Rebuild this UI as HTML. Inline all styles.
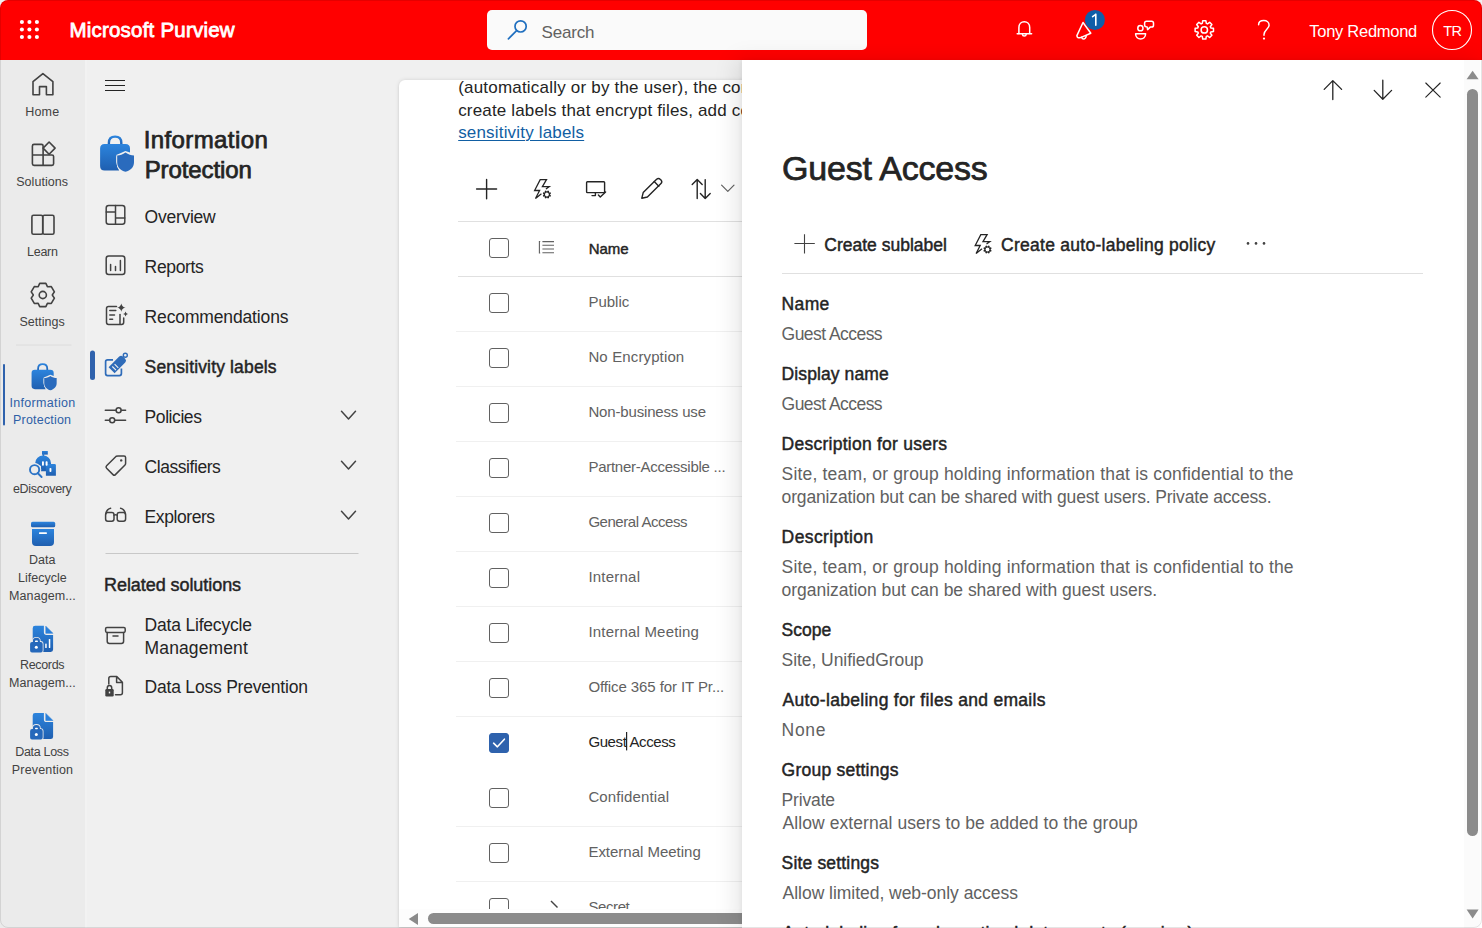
<!DOCTYPE html><html><head><meta charset="utf-8"><title>Microsoft Purview</title><style>
html,body{margin:0;padding:0;width:1482px;height:928px;overflow:hidden;background:#f0f0f0;font-family:'Liberation Sans',sans-serif}
.t{position:absolute;line-height:1;white-space:nowrap}
.a{position:absolute}
svg.a{overflow:visible}
.cb{position:absolute;width:20px;height:20px;box-sizing:border-box;border:1px solid #616161;border-radius:3px;background:#fff}
.sep{position:absolute;height:1px}
</style></head><body>
<div class="a" style="left:0;top:60px;width:85px;height:868px;background:#ebebeb"></div><div class="a" style="left:85px;top:60px;width:2px;height:868px;background:#f2f2f2"></div>
<div class="a" style="left:87px;top:60px;width:700px;height:868px;background:#f0f0f0"></div>
<div class="a" style="left:399px;top:80px;width:420px;height:847px;background:#fff;border-radius:6px 6px 0 0;box-shadow:0 0 4px rgba(0,0,0,0.12),0 1px 2px rgba(0,0,0,0.08)"></div>
<div class="a" style="left:399px;top:80px;width:420px;height:828.7px;overflow:hidden">
<div style="position:absolute;left:-399px;top:-80px;width:1482px;height:928px">
<div class="sep" style="left:458px;top:221px;width:300px;background:#e0e0e0"></div>
<div class="sep" style="left:458px;top:276px;width:300px;background:#e0e0e0"></div>
<div class="sep" style="left:456px;top:331px;width:300px;background:#f0f0f0"></div>
<div class="sep" style="left:456px;top:386px;width:300px;background:#f0f0f0"></div>
<div class="sep" style="left:456px;top:441px;width:300px;background:#f0f0f0"></div>
<div class="sep" style="left:456px;top:496px;width:300px;background:#f0f0f0"></div>
<div class="sep" style="left:456px;top:551px;width:300px;background:#f0f0f0"></div>
<div class="sep" style="left:456px;top:606px;width:300px;background:#f0f0f0"></div>
<div class="sep" style="left:456px;top:661px;width:300px;background:#f0f0f0"></div>
<div class="sep" style="left:456px;top:716px;width:300px;background:#f0f0f0"></div>
<div class="sep" style="left:456px;top:826px;width:300px;background:#f0f0f0"></div>
<div class="sep" style="left:456px;top:881px;width:300px;background:#f0f0f0"></div>
<div class="cb" style="left:489px;top:238px"></div>
<div class="cb" style="left:489px;top:293px"></div>
<div class="cb" style="left:489px;top:348px"></div>
<div class="cb" style="left:489px;top:403px"></div>
<div class="cb" style="left:489px;top:458px"></div>
<div class="cb" style="left:489px;top:513px"></div>
<div class="cb" style="left:489px;top:568px"></div>
<div class="cb" style="left:489px;top:623px"></div>
<div class="cb" style="left:489px;top:678px"></div>
<div class="cb" style="left:489px;top:733px;background:#2e62ad;border-color:#2e62ad"></div>
<div class="cb" style="left:489px;top:788px"></div>
<div class="cb" style="left:489px;top:843px"></div>
<div class="cb" style="left:489px;top:898px"></div>
<svg class="a" style="left:0;top:0;" width="1482" height="928" viewBox="0 0 1482 928"><path fill="none" stroke="#242424" stroke-width="1.4" stroke-linejoin="round" stroke-linecap="round" d="M486.6 179.4 L486.6 198.8 M476.6 189 L496.6 189"/><path d="M546.30 188.70 L549.20 186.60 L542.40 186.60 L546.50 179.60 L540.20 179.60 L534.60 190.50 L539.60 190.50 L535.50 198.50 L541.10 194.10" fill="none" stroke="#242424" stroke-width="1.3" stroke-linejoin="miter" stroke-linecap="round"/><path d="M550.99 195.47 L550.47 196.70 L549.09 196.55 L548.95 196.69 L549.10 198.07 L547.87 198.59 L547.00 197.50 L546.80 197.50 L545.93 198.59 L544.70 198.07 L544.85 196.69 L544.71 196.55 L543.33 196.70 L542.81 195.47 L543.90 194.60 L543.90 194.40 L542.81 193.53 L543.33 192.30 L544.71 192.45 L544.85 192.31 L544.70 190.93 L545.93 190.41 L546.80 191.50 L547.00 191.50 L547.87 190.41 L549.10 190.93 L548.95 192.31 L549.09 192.45 L550.47 192.30 L550.99 193.53 L549.90 194.40 L549.90 194.60 Z" fill="#242424"/><circle cx="546.90" cy="194.50" r="1.9" fill="#fff"/><g fill="none" stroke="#242424" stroke-width="1.4" stroke-linejoin="round" stroke-linecap="round"><rect x="586.6" y="181.8" width="18" height="10.8" rx="0.8"/><path d="M595.4 192.8 L595.4 195.6 L592 195.6"/><path d="M598.4 195 L600.3 197 L605.6 192"/></g><g fill="none" stroke="#242424" stroke-width="1.4" stroke-linejoin="round" stroke-linecap="round"><path d="M641.8 198.2 L643.2 192.6 L656.6 179.2 Q658.6 177.6 660.4 179.4 L661 180 Q662.6 181.8 661 183.6 L647.4 197 Z"/><path d="M654.2 181.6 L658.8 186.2"/></g><g fill="none" stroke="#242424" stroke-width="1.4" stroke-linejoin="round" stroke-linecap="round"><path d="M697.2 198.6 L697.2 179.6 M692.2 184.6 L697.2 179.6 L702.2 184.6"/><path d="M705.2 179.6 L705.2 198.6 M700.4 193.6 L705.2 198.6 L710.2 193.6"/></g><path d="M721.6 185.2 L727.8 191.4 L734 185.2" fill="none" stroke="#616161" stroke-width="1.2" stroke-linecap="round" stroke-linejoin="round"/><g fill="none" stroke="#616161" stroke-width="1.1"><path d="M540.2 241.5 L539.4 241.5 L539.4 253 L540.2 253"/><path d="M542.4 241.6 L554 241.6 M542.4 245.3 L554 245.3 M542.4 249 L554 249 M542.4 252.7 L554 252.7"/></g><path d="M493.6 743.2 L497.4 746.8 L504.4 739.2" fill="none" stroke="#fff" stroke-width="1.6" stroke-linecap="round" stroke-linejoin="round"/><rect x="626" y="732" width="1.2" height="18.4" fill="#242424"/><path d="M551 901 L557.5 907.5" stroke="#424242" stroke-width="1.4"/></svg>
<div class="t" style="top:79.0px;font-size:17px;color:#242424;letter-spacing:0.2px;left:458.2px;">(automatically or by the user), the content is protected</div>
<div class="t" style="top:102.0px;font-size:17px;color:#242424;letter-spacing:0.161px;left:458.2px;">create labels that encrypt files, add content marking</div>
<div class="t" style="top:124.0px;font-size:17px;color:#115ea3;letter-spacing:0.176px;left:458.2px;text-decoration:underline;text-underline-offset:2px;text-decoration-thickness:1px;">sensitivity labels</div>
<div class="t" style="top:241.0px;font-size:15px;-webkit-text-stroke:0.45px #242424;color:#242424;left:588.7px;">Name</div>
<div class="t" style="top:294.0px;font-size:15px;color:#616161;left:588.4px;">Public</div>
<div class="t" style="top:349.0px;font-size:15px;color:#616161;letter-spacing:0.133px;left:588.4px;">No Encryption</div>
<div class="t" style="top:404.0px;font-size:15px;color:#616161;letter-spacing:-0.16px;left:588.4px;">Non-business use</div>
<div class="t" style="top:459.0px;font-size:15px;color:#616161;letter-spacing:-0.257px;left:588.4px;">Partner-Accessible ...</div>
<div class="t" style="top:514.0px;font-size:15px;color:#616161;letter-spacing:-0.462px;left:588.4px;">General Access</div>
<div class="t" style="top:569.0px;font-size:15px;color:#616161;letter-spacing:0.229px;left:588.4px;">Internal</div>
<div class="t" style="top:624.0px;font-size:15px;color:#616161;letter-spacing:0.2px;left:588.4px;">Internal Meeting</div>
<div class="t" style="top:679.0px;font-size:15px;color:#616161;letter-spacing:-0.091px;left:588.4px;">Office 365 for IT Pr...</div>
<div class="t" style="top:734.0px;font-size:15px;color:#242424;letter-spacing:-0.391px;left:588.4px;">Guest Access</div>
<div class="t" style="top:789.0px;font-size:15px;color:#616161;letter-spacing:0.136px;left:588.4px;">Confidential</div>
<div class="t" style="top:844.0px;font-size:15px;color:#616161;letter-spacing:-0.013px;left:588.4px;">External Meeting</div>
<div class="t" style="top:899.0px;font-size:15px;color:#616161;letter-spacing:-0.4px;left:588.4px;">Secret</div>
</div></div>
<div class="a" style="left:399px;top:908.7px;width:400px;height:18.3px;background:#fdfdfd"></div>
<div class="a" style="left:427.5px;top:913px;width:330px;height:10.7px;background:#8b8b8b;border-radius:5.5px"></div>
<svg class="a" style="left:0;top:0" width="1482" height="928"><path d="M408.7 919 L418 913 L418 925 Z" fill="#8b8b8b"/></svg>
<div class="a" style="left:0;top:0;width:1482px;height:60px;background:#ff0000;border-radius:8px 8px 0 0"></div>
<div class="a" style="left:487px;top:10px;width:380px;height:40px;background:#fafafa;border-radius:5px"></div>
<svg class="a" style="left:0;top:0;" width="1482" height="928" viewBox="0 0 1482 928"><circle cx="21.9" cy="22" r="2.05" fill="#fff"/><circle cx="29.4" cy="22" r="2.05" fill="#fff"/><circle cx="36.9" cy="22" r="2.05" fill="#fff"/><circle cx="21.9" cy="29.5" r="2.05" fill="#fff"/><circle cx="29.4" cy="29.5" r="2.05" fill="#fff"/><circle cx="36.9" cy="29.5" r="2.05" fill="#fff"/><circle cx="21.9" cy="37" r="2.05" fill="#fff"/><circle cx="29.4" cy="37" r="2.05" fill="#fff"/><circle cx="36.9" cy="37" r="2.05" fill="#fff"/><g fill="none" stroke="#1f6fbf" stroke-width="1.7" stroke-linecap="round"><circle cx="520.6" cy="26.4" r="5.6"/><path d="M516.6 30.6 L508.4 38.8"/></g><g fill="none" stroke="#fff" stroke-width="1.5" stroke-linejoin="round" stroke-linecap="round"><path d="M1018.9 33.6 L1018.9 27.6 C1018.9 24 1021.3 21.8 1024.3 21.8 C1027.3 21.8 1029.7 24 1029.7 27.6 L1029.7 33.6"/><path d="M1017.2 33.8 L1031.6 33.8"/><path d="M1022.4 34.4 C1022.6 36.6 1026 36.6 1026.2 34.4"/></g><g fill="none" stroke="#fff" stroke-width="1.5" stroke-linejoin="round" stroke-linecap="round"><path d="M1083 22.5 L1090.8 33.2 L1080.6 37.6 Q1077 38.5 1076.9 35.6 Z"/><path d="M1081.6 37.2 C1082.3 39.8 1085.6 39.8 1086.2 36"/></g><circle cx="1094.9" cy="19.9" r="10" fill="#0f5ea8"/><path d="M1095.8 14.3 L1095.8 25.2 M1095.8 14.3 L1092.6 16.6" stroke="#fff" stroke-width="1.6" fill="none" stroke-linecap="round"/><g fill="none" stroke="#fff" stroke-width="1.5" stroke-linejoin="round" stroke-linecap="round"><circle cx="1140.4" cy="28.2" r="2.6"/><path d="M1135.6 33.8 L1145.6 33.8 C1145.6 37.4 1143 39 1140.6 39 C1138.2 39 1135.6 37.4 1135.6 33.8 Z"/><path d="M1146.6 21.2 L1151.6 21.2 Q1153.5 21.2 1153.5 23.1 L1153.5 25.2 Q1153.5 27.1 1151.6 27.1 L1150.2 27.1 L1147.6 29.6 L1147.2 27.1 Q1144.6 27 1144.6 25.1 L1144.6 23.1 Q1144.6 21.2 1146.6 21.2 Z"/></g><g fill="none" stroke="#fff" stroke-width="1.5" stroke-linejoin="round" stroke-linecap="round"><polygon points="1202.73,20.73 1205.87,20.73 1206.31,23.40 1207.47,23.89 1209.67,22.31 1211.89,24.53 1210.31,26.73 1210.80,27.89 1213.47,28.33 1213.47,31.47 1210.80,31.91 1210.31,33.07 1211.89,35.27 1209.67,37.49 1207.47,35.91 1206.31,36.40 1205.87,39.07 1202.73,39.07 1202.29,36.40 1201.13,35.91 1198.93,37.49 1196.71,35.27 1198.29,33.07 1197.80,31.91 1195.13,31.47 1195.13,28.33 1197.80,27.89 1198.29,26.73 1196.71,24.53 1198.93,22.31 1201.13,23.89 1202.29,23.40"/><circle cx="1204.3" cy="29.9" r="3.2"/></g><g fill="none" stroke="#fff" stroke-width="1.5" stroke-linejoin="round" stroke-linecap="round"><path d="M1258.6 24.8 C1258.6 21.8 1261 20.6 1263.8 20.6 C1266.8 20.6 1269.1 22.5 1269.1 25.2 C1269.1 28.6 1264 30 1264 34.4 L1264 35.2"/></g><circle cx="1264" cy="38.6" r="1.1" fill="#fff"/><circle cx="1452" cy="30" r="19.5" fill="none" stroke="#fff" stroke-width="1.1"/></svg>
<svg class="a" style="left:0;top:0;" width="1482" height="928" viewBox="0 0 1482 928"><path fill="none" stroke="#424242" stroke-width="1.6" stroke-linejoin="round" stroke-linecap="round" d="M33 94.8 L33 81.6 L42.9 73.6 L52.9 81.6 L52.9 94.8 L46.4 94.8 L46.4 86.6 L39.5 86.6 L39.5 94.8 Z"/><g fill="none" stroke="#424242" stroke-width="1.6" stroke-linejoin="round" stroke-linecap="round"><path d="M43.1 155 L43.1 146 Q43.1 144.4 41.5 144.4 L34 144.4 Q32.4 144.4 32.4 146 L32.4 163.8 Q32.4 165.4 34 165.4 L52 165.4 Q53.6 165.4 53.6 163.8 L53.6 156.6 Q53.6 155 52 155 Z M32.4 155 L43.1 155 L43.1 165.4"/><path d="M49.1 142 L55.1 148.1 L49.1 154.2 L43.1 148.1 Z"/></g><g fill="none" stroke="#424242" stroke-width="1.6" stroke-linejoin="round" stroke-linecap="round"><rect x="31.9" y="215.3" width="10.8" height="19" rx="1.6"/><rect x="42.8" y="215.3" width="11.2" height="19" rx="1.6"/></g><g fill="none" stroke="#424242" stroke-width="1.6" stroke-linejoin="round" stroke-linecap="round"><path d="M38.20 286.58 L39.72 283.40 L45.88 283.40 L47.40 286.58 L47.79 286.80 L51.30 286.53 L54.39 291.87 L52.40 294.77 L52.40 295.23 L54.39 298.13 L51.30 303.47 L47.79 303.20 L47.40 303.42 L45.88 306.60 L39.72 306.60 L38.20 303.42 L37.81 303.20 L34.30 303.47 L31.21 298.13 L33.20 295.23 L33.20 294.77 L31.21 291.87 L34.30 286.53 L37.81 286.80 Z"/><circle cx="42.8" cy="295" r="3.6"/></g><path d="M16 345 L71.5 345" stroke="#dcdcdc" stroke-width="1"/><rect x="3" y="364" width="2" height="61.5" rx="1" fill="#2f62ad"/></svg>
<svg class="a" style="left:0;top:0;" width="1482" height="928" viewBox="0 0 1482 928"><defs><linearGradient id="bl" x1="0" y1="0" x2="0" y2="1"><stop offset="0" stop-color="#2c84dd"/><stop offset="1" stop-color="#1f5fb0"/></linearGradient></defs><path d="M38.09 370.40 L38.09 368.77 C38.09 365.66 40.08 364.18 42.67 364.18 C45.26 364.18 47.26 365.66 47.26 368.77 L47.26 370.40" fill="none" stroke="url(#bl)" stroke-width="1.78"/><path d="M34.90 369.73 L50.37 369.73 Q53.70 369.73 53.70 373.06 L53.70 376.02 L50.30 374.84 L44.45 377.36 L43.56 379.06 L43.56 382.83 Q43.78 386.90 45.71 389.20 L34.90 389.20 Q31.57 389.20 31.57 385.87 L31.57 373.06 Q31.57 369.73 34.90 369.73 Z" fill="url(#bl)"/><path d="M50.37 376.02 C52.44 377.50 54.66 378.10 56.66 378.10 L56.66 383.13 C56.66 386.90 54.00 389.12 50.37 390.23 C46.74 389.12 44.23 386.90 44.23 383.13 L44.23 378.10 C46.23 378.10 48.37 377.50 50.37 376.02 Z" fill="#2a6bbd" stroke="#ebebeb" stroke-width="1.11" paint-order="stroke"/><g fill="url(#bl)"><rect x="42" y="451" width="5.8" height="3.6"/><rect x="42.6" y="453.5" width="1.6" height="3"/><path d="M35.2 463.2 A7.9 7.6 0 0 1 51 463.2 L51 471.2 L41 471.2 L41 466 Z"/><path d="M45.9 464 L54.6 464 Q55.9 464 55.9 465.3 L55.9 475.7 L45.9 475.7 Z"/></g><g fill="#fff"><rect x="42" y="461.2" width="1.9" height="4.6" rx="0.8"/><rect x="45.6" y="461.2" width="2" height="4.6" rx="0.8"/><rect x="49.5" y="468" width="1.9" height="4" rx="0.8"/></g><g fill="none"><circle cx="34.6" cy="469.7" r="4.6" stroke="#ebebeb" stroke-width="4.2"/><path d="M37.6 473 L41.8 477.2" stroke="#ebebeb" stroke-width="3.6"/><circle cx="34.6" cy="469.7" r="4.6" stroke="#2a73c6" stroke-width="1.9"/><path d="M37.6 473 L41.6 477" stroke="#2a73c6" stroke-width="1.9" stroke-linecap="round"/></g><rect x="31" y="521.8" width="24.2" height="5.5" rx="1.6" fill="url(#bl)"/><path d="M32 529.1 L54 529.1 L54 541.9 Q54 545.9 50 545.9 L36 545.9 Q32 545.9 32 541.9 Z" fill="url(#bl)"/><rect x="39" y="532.2" width="7.9" height="1.8" rx="0.6" fill="#fff"/><path d="M32.7 628.20 Q32.7 625.80 35.1 625.80 L43.9 625.80 L43.9 632.20 Q43.9 634.90 46.6 634.90 L53.1 634.90 L53.1 649.50 Q53.1 651.90 50.7 651.90 L35.1 651.90 Q32.7 651.90 32.7 649.50 Z" fill="url(#bl)"/><path d="M45.8 626.20 L52.9 633.30 L45.8 633.30 Z" fill="#2a80da" stroke="#2a80da" stroke-width="0.6" stroke-linejoin="round"/><g fill="#fff"><rect x="45.2" y="643.40" width="1.5" height="4.7" rx="0.6"/><rect x="48.8" y="639.00" width="1.5" height="9.1" rx="0.6"/></g><path d="M30.1 644.00 Q30.1 641.90 32 641.90 L32.9 641.90 L32.9 640.90 Q32.9 637.70 36.4 637.70 Q39.9 637.70 39.9 640.90 L39.9 641.90 L40.8 641.90 Q42.7 641.90 42.7 644.00 L42.7 650.40 Q42.7 652.40 40.8 652.40 L32 652.40 Q30.1 652.40 30.1 650.40 Z" fill="#2568bb" stroke="#ebebeb" stroke-width="1.6" paint-order="stroke"/><rect x="35" y="640.60" width="2.9" height="1.5" rx="0.7" fill="#fff"/><circle cx="36.3" cy="647.20" r="1.5" fill="#fff"/><path d="M32.7 715.40 Q32.7 713.00 35.1 713.00 L43.9 713.00 L43.9 719.40 Q43.9 722.10 46.6 722.10 L53.1 722.10 L53.1 736.70 Q53.1 739.10 50.7 739.10 L35.1 739.10 Q32.7 739.10 32.7 736.70 Z" fill="url(#bl)"/><path d="M45.8 713.40 L52.9 720.50 L45.8 720.50 Z" fill="#2a80da" stroke="#2a80da" stroke-width="0.6" stroke-linejoin="round"/><path d="M30.1 731.20 Q30.1 729.10 32 729.10 L32.9 729.10 L32.9 728.10 Q32.9 724.90 36.4 724.90 Q39.9 724.90 39.9 728.10 L39.9 729.10 L40.8 729.10 Q42.7 729.10 42.7 731.20 L42.7 737.60 Q42.7 739.60 40.8 739.60 L32 739.60 Q30.1 739.60 30.1 737.60 Z" fill="#2568bb" stroke="#ebebeb" stroke-width="1.6" paint-order="stroke"/><rect x="35" y="727.80" width="2.9" height="1.5" rx="0.7" fill="#fff"/><circle cx="36.3" cy="734.40" r="1.5" fill="#fff"/><path d="M108.90 145.00 L108.90 142.80 C108.90 138.60 111.60 136.60 115.10 136.60 C118.60 136.60 121.30 138.60 121.30 142.80 L121.30 145.00" fill="none" stroke="url(#bl)" stroke-width="2.40"/><path d="M104.60 144.10 L125.50 144.10 Q130.00 144.10 130.00 148.60 L130.00 152.60 L125.40 151.00 L117.50 154.40 L116.30 156.70 L116.30 161.80 Q116.60 167.30 119.20 170.40 L104.60 170.40 Q100.10 170.40 100.10 165.90 L100.10 148.60 Q100.10 144.10 104.60 144.10 Z" fill="url(#bl)"/><path d="M125.50 152.60 C128.30 154.60 131.30 155.40 134.00 155.40 L134.00 162.20 C134.00 167.30 130.40 170.30 125.50 171.80 C120.60 170.30 117.20 167.30 117.20 162.20 L117.20 155.40 C119.90 155.40 122.80 154.60 125.50 152.60 Z" fill="#2a6bbd" stroke="#f0f0f0" stroke-width="1.50" paint-order="stroke"/><g fill="none" stroke="#424242" stroke-width="1.5" stroke-linejoin="round" stroke-linecap="round"><rect x="106.2" y="205.6" width="18.6" height="18.6" rx="2.5"/><path d="M106.2 212 L115.5 212 M115.5 205.6 L115.5 224.2 M115.5 218 L124.8 218"/></g><g fill="none" stroke="#424242" stroke-width="1.5" stroke-linejoin="round" stroke-linecap="round"><rect x="106.2" y="256" width="18.6" height="18.6" rx="2.5"/><path d="M110.6 264.5 L110.6 270.5 M115.5 266.5 L115.5 270.5 M120.4 260.5 L120.4 270.5"/></g><g fill="none" stroke="#424242" stroke-width="1.5" stroke-linejoin="round" stroke-linecap="round"><path d="M116.5 306.6 L108.6 306.6 Q106.5 306.6 106.5 308.7 L106.5 322.3 Q106.5 324.4 108.6 324.4 L121.6 324.4 Q123.7 324.4 123.7 322.3 L123.7 318"/><path d="M109.8 310.6 L115.8 310.6 M109.8 315 L114.5 315 M109.8 319.2 L112.6 319.2"/><path d="M120 314.5 L120 324"/></g><path d="M121.3 303.4 Q122 307 125.5 307.6 Q122 308.3 121.3 311.8 Q120.6 308.3 117.1 307.6 Q120.6 307 121.3 303.4 Z" fill="#424242"/><path d="M125.6 311.4 Q126 313.5 128 313.9 Q126 314.3 125.6 316.4 Q125.2 314.3 123.2 313.9 Q125.2 313.5 125.6 311.4 Z" fill="#424242"/><path d="M113 359.8 L107.6 359.8 Q105.6 359.8 105.6 361.8 L105.6 373.6 Q105.6 375.6 107.6 375.6 L119.4 375.6 Q121.4 375.6 121.4 373.6 L121.4 368.6" fill="none" stroke="#2f6cb9" stroke-width="1.7"/><path d="M108.6 367.2 L119.2 356.6 Q121 354.8 123 356.6 L125.2 358.8 Q127 360.8 125.2 362.6 L114.6 373.2 Z" fill="#2f6cb9"/><path d="M112.3 366.5 L116 370.2 M114.6 364.2 L118.3 367.9" stroke="#f0f0f0" stroke-width="1.1"/><circle cx="125.3" cy="355.3" r="2" fill="none" stroke="#2f6cb9" stroke-width="1.4"/><rect x="90" y="350.5" width="5" height="29.5" rx="2.5" fill="#2f62ad"/><g fill="none" stroke="#424242" stroke-width="1.5" stroke-linejoin="round" stroke-linecap="round"><path d="M105.3 410.2 L116 410.2 M121.2 410.2 L125.6 410.2 M105.3 420.3 L109.6 420.3 M114.8 420.3 L125.6 420.3"/><circle cx="118.6" cy="410.2" r="2.5"/><circle cx="112.2" cy="420.3" r="2.5"/></g><g fill="none" stroke="#424242" stroke-width="1.5" stroke-linejoin="round" stroke-linecap="round"><path d="M118 456 L124 456 Q125.6 456 125.6 457.6 L125.6 463.6 Q125.6 464.4 125 465 L115.4 474.6 Q114.2 475.8 113 474.6 L106.6 468.2 Q105.4 467 106.6 465.8 L116.2 456.2 Q116.8 456 118 456 Z"/></g><circle cx="121.2" cy="460.4" r="1.2" fill="#424242"/><g fill="none" stroke="#424242" stroke-width="1.5" stroke-linejoin="round" stroke-linecap="round"><rect x="105.6" y="512.6" width="8.4" height="8.6" rx="2.2"/><rect x="117.2" y="512.6" width="8.4" height="8.6" rx="2.2"/><path d="M114 515.2 Q115.6 514.2 117.2 515.2"/><path d="M105.8 514 Q106.6 509 110.6 508.2 M125.4 514 Q124.6 509 120.6 508.2"/></g><path d="M341.5 411.3 L348.5 418.9 L355.5 411.3" fill="none" stroke="#424242" stroke-width="1.5" stroke-linecap="round" stroke-linejoin="round"/><path d="M341.5 461.3 L348.5 468.9 L355.5 461.3" fill="none" stroke="#424242" stroke-width="1.5" stroke-linecap="round" stroke-linejoin="round"/><path d="M341.5 511.3 L348.5 518.9 L355.5 511.3" fill="none" stroke="#424242" stroke-width="1.5" stroke-linecap="round" stroke-linejoin="round"/><path d="M105.5 553.5 L358.5 553.5" stroke="#c8c8c8" stroke-width="1"/><g fill="none" stroke="#424242" stroke-width="1.5" stroke-linejoin="round" stroke-linecap="round"><rect x="105.6" y="627.4" width="19.6" height="5" rx="1.3"/><path d="M107.2 632.4 L107.2 641.2 Q107.2 643.4 109.4 643.4 L121.4 643.4 Q123.6 643.4 123.6 641.2 L123.6 632.4 M113 636 L118 636"/></g><g fill="none" stroke="#424242" stroke-width="1.5" stroke-linejoin="round" stroke-linecap="round"><path d="M108.8 684 L108.8 678.6 Q108.8 676.6 110.8 676.6 L116.8 676.6 L122.4 682.2 L122.4 692.8 Q122.4 694.8 120.4 694.8 L115.5 694.8 M116.6 676.8 L116.6 682.4 L122.2 682.4"/></g><rect x="105.3" y="689" width="8.4" height="7.5" rx="1.2" fill="#424242"/><path d="M107.3 689.5 L107.3 687.8 Q107.3 685.4 109.5 685.4 Q111.7 685.4 111.7 687.8 L111.7 689.5" fill="none" stroke="#424242" stroke-width="1.5"/><rect x="108.8" y="691.6" width="1.4" height="1.8" fill="#f0f0f0"/><path d="M105 80.5 L125 80.5 M105 85.5 L125 85.5 M105 90.5 L125 90.5" stroke="#242424" stroke-width="1.1"/></svg>
<div class="t" style="top:106.0px;font-size:12.5px;color:#424242;letter-spacing:0.2px;left:25.2px;">Home</div>
<div class="t" style="top:176.0px;font-size:12.5px;color:#424242;letter-spacing:0.062px;left:16.2px;">Solutions</div>
<div class="t" style="top:246.0px;font-size:12.5px;color:#424242;letter-spacing:-0.25px;left:27.0px;">Learn</div>
<div class="t" style="top:316.0px;font-size:12.5px;color:#424242;left:19.5px;">Settings</div>
<div class="t" style="top:397.0px;font-size:12.5px;color:#2f5fa6;letter-spacing:0.33px;left:9.4px;">Information</div>
<div class="t" style="top:414.0px;font-size:12.5px;color:#2f5fa6;letter-spacing:0.189px;left:13.1px;">Protection</div>
<div class="t" style="top:483.0px;font-size:12.5px;color:#424242;letter-spacing:-0.333px;left:13.0px;">eDiscovery</div>
<div class="t" style="top:554.0px;font-size:12.5px;color:#424242;left:29.0px;">Data</div>
<div class="t" style="top:572.0px;font-size:12.5px;color:#424242;left:18.0px;">Lifecycle</div>
<div class="t" style="top:590.0px;font-size:12.5px;color:#424242;letter-spacing:0.078px;left:9.1px;">Managem...</div>
<div class="t" style="top:659.0px;font-size:12.5px;color:#424242;letter-spacing:-0.333px;left:20.0px;">Records</div>
<div class="t" style="top:677.0px;font-size:12.5px;color:#424242;letter-spacing:0.078px;left:9.1px;">Managem...</div>
<div class="t" style="top:746.0px;font-size:12.5px;color:#424242;letter-spacing:-0.312px;left:15.2px;">Data Loss</div>
<div class="t" style="top:764.0px;font-size:12.5px;color:#424242;letter-spacing:0.167px;left:11.8px;">Prevention</div>
<div class="t" style="top:128.0px;font-size:24px;-webkit-text-stroke:0.75px #242424;color:#242424;letter-spacing:0.4px;left:143.7px;">Information</div>
<div class="t" style="top:158.0px;font-size:24px;-webkit-text-stroke:0.75px #242424;color:#242424;letter-spacing:-0.111px;left:144.7px;">Protection</div>
<div class="t" style="top:209.0px;font-size:17.5px;color:#242424;letter-spacing:-0.257px;left:144.6px;">Overview</div>
<div class="t" style="top:259.0px;font-size:17.5px;color:#242424;letter-spacing:-0.333px;left:144.6px;">Reports</div>
<div class="t" style="top:309.0px;font-size:17.5px;color:#242424;letter-spacing:-0.143px;left:144.6px;">Recommendations</div>
<div class="t" style="top:359.0px;font-size:17.5px;-webkit-text-stroke:0.45px #242424;color:#242424;letter-spacing:0.153px;left:144.6px;">Sensitivity labels</div>
<div class="t" style="top:409.0px;font-size:17.5px;color:#242424;letter-spacing:-0.429px;left:144.6px;">Policies</div>
<div class="t" style="top:459.0px;font-size:17.5px;color:#242424;letter-spacing:-0.45px;left:144.6px;">Classifiers</div>
<div class="t" style="top:509.0px;font-size:17.5px;color:#242424;letter-spacing:-0.425px;left:144.6px;">Explorers</div>
<div class="t" style="top:576.0px;font-size:18px;-webkit-text-stroke:0.45px #242424;color:#242424;letter-spacing:-0.062px;left:104.0px;">Related solutions</div>
<div class="t" style="top:617.0px;font-size:17.5px;color:#242424;letter-spacing:-0.2px;left:144.6px;">Data Lifecycle</div>
<div class="t" style="top:640.0px;font-size:17.5px;color:#242424;letter-spacing:0.111px;left:144.6px;">Management</div>
<div class="t" style="top:679.0px;font-size:17.5px;color:#242424;letter-spacing:-0.211px;left:144.6px;">Data Loss Prevention</div>
<div class="t" style="top:20.0px;font-size:20.5px;-webkit-text-stroke:0.8px #fff;color:#fff;letter-spacing:0.219px;left:69.4px;">Microsoft Purview</div>
<div class="t" style="top:24.0px;font-size:17px;color:#616161;letter-spacing:-0.2px;left:541.6px;">Search</div>
<div class="t" style="top:23.0px;font-size:16.5px;color:#fff;letter-spacing:-0.273px;left:1309.3px;">Tony Redmond</div>
<div class="t" style="top:24.0px;font-size:14.5px;color:#fff;letter-spacing:-0.5px;left:1443.2px;">TR</div>
<div class="a" style="left:742px;top:60px;width:740px;height:868px;background:#fff;box-shadow:-6px 0 22px rgba(0,0,0,0.10),-1px 0 4px rgba(0,0,0,0.05)"></div>
<div class="sep" style="left:782px;top:272.5px;width:641px;background:#e0e0e0"></div>
<div class="a" style="left:1464px;top:60px;width:16px;height:868px;background:#fbfbfb"></div>
<div class="a" style="left:1467.2px;top:89px;width:11px;height:747px;background:#8b8b8b;border-radius:5.5px"></div>
<div class="a" style="left:742px;top:60px;width:722px;height:868px;overflow:hidden"><div style="position:absolute;left:-742px;top:-60px;width:1482px;height:928px">
<div class="t" style="top:151.0px;font-size:34px;-webkit-text-stroke:0.75px #242424;color:#242424;letter-spacing:-0.182px;left:782.0px;">Guest Access</div>
<div class="t" style="top:237.0px;font-size:17.5px;-webkit-text-stroke:0.45px #242424;color:#242424;left:824.3px;">Create sublabel</div>
<div class="t" style="top:237.0px;font-size:17.5px;-webkit-text-stroke:0.45px #242424;color:#242424;letter-spacing:0.269px;left:1001.0px;">Create auto-labeling policy</div>
<div class="t" style="top:296.0px;font-size:17.5px;-webkit-text-stroke:0.45px #242424;color:#242424;letter-spacing:0.333px;left:781.6px;">Name</div>
<div class="t" style="top:326.0px;font-size:17.5px;color:#616161;letter-spacing:-0.545px;left:781.6px;">Guest Access</div>
<div class="t" style="top:366.0px;font-size:17.5px;-webkit-text-stroke:0.45px #242424;color:#242424;letter-spacing:0.091px;left:781.6px;">Display name</div>
<div class="t" style="top:396.0px;font-size:17.5px;color:#616161;letter-spacing:-0.545px;left:781.6px;">Guest Access</div>
<div class="t" style="top:436.0px;font-size:17.5px;-webkit-text-stroke:0.45px #242424;color:#242424;letter-spacing:0.25px;left:781.6px;">Description for users</div>
<div class="t" style="top:466.0px;font-size:17.5px;color:#616161;letter-spacing:0.179px;left:781.6px;">Site, team, or group holding information that is confidential to the</div>
<div class="t" style="top:489.0px;font-size:17.5px;color:#616161;letter-spacing:-0.159px;left:781.6px;">organization but can be shared with guest users. Private access.</div>
<div class="t" style="top:529.0px;font-size:17.5px;-webkit-text-stroke:0.45px #242424;color:#242424;letter-spacing:0.4px;left:781.6px;">Description</div>
<div class="t" style="top:559.0px;font-size:17.5px;color:#616161;letter-spacing:0.179px;left:781.6px;">Site, team, or group holding information that is confidential to the</div>
<div class="t" style="top:582.0px;font-size:17.5px;color:#616161;letter-spacing:-0.021px;left:781.6px;">organization but can be shared with guest users.</div>
<div class="t" style="top:622.0px;font-size:17.5px;-webkit-text-stroke:0.45px #242424;color:#242424;left:781.6px;">Scope</div>
<div class="t" style="top:652.0px;font-size:17.5px;color:#616161;letter-spacing:-0.059px;left:781.6px;">Site, UnifiedGroup</div>
<div class="t" style="top:692.0px;font-size:17.5px;-webkit-text-stroke:0.45px #242424;color:#242424;letter-spacing:0.303px;left:782.6px;">Auto-labeling for files and emails</div>
<div class="t" style="top:722.0px;font-size:17.5px;color:#616161;letter-spacing:0.667px;left:781.6px;">None</div>
<div class="t" style="top:762.0px;font-size:17.5px;-webkit-text-stroke:0.45px #242424;color:#242424;letter-spacing:0.231px;left:781.6px;">Group settings</div>
<div class="t" style="top:792.0px;font-size:17.5px;color:#616161;letter-spacing:-0.167px;left:781.6px;">Private</div>
<div class="t" style="top:815.0px;font-size:17.5px;color:#616161;letter-spacing:0.068px;left:782.6px;">Allow external users to be added to the group</div>
<div class="t" style="top:855.0px;font-size:17.5px;-webkit-text-stroke:0.45px #242424;color:#242424;letter-spacing:0.167px;left:781.6px;">Site settings</div>
<div class="t" style="top:885.0px;font-size:17.5px;color:#616161;letter-spacing:-0.034px;left:782.6px;">Allow limited, web-only access</div>
<div class="t" style="top:925.0px;font-size:17.5px;-webkit-text-stroke:0.45px #242424;color:#242424;letter-spacing:0.18px;left:782.6px;">Auto-labeling for schematized data assets (preview)</div>
</div></div>
<svg class="a" style="left:0;top:0;" width="1482" height="928" viewBox="0 0 1482 928"><path fill="none" stroke="#242424" stroke-width="1.3" stroke-linejoin="round" stroke-linecap="round" d="M1332.8 80.6 L1332.8 99.6 M1324.2 89.4 L1332.8 80.6 L1341.6 89.4"/><path fill="none" stroke="#242424" stroke-width="1.3" stroke-linejoin="round" stroke-linecap="round" d="M1382.8 80.2 L1382.8 99.2 M1374.2 90.4 L1382.8 99.2 L1391.6 90.4"/><path d="M1425.8 83 L1440.2 97.2 M1440.2 83 L1425.8 97.2" fill="none" stroke="#242424" stroke-width="1.1" stroke-linecap="round"/><path d="M804.5 234.3 L804.5 253.6 M794.4 243.5 L814.8 243.5" fill="none" stroke="#424242" stroke-width="1.1"/><path d="M986.90 243.70 L989.80 241.60 L983.00 241.60 L987.10 234.60 L980.80 234.60 L975.20 245.50 L980.20 245.50 L976.10 253.50 L981.70 249.10" fill="none" stroke="#242424" stroke-width="1.3" stroke-linejoin="miter" stroke-linecap="round"/><path d="M991.59 250.47 L991.07 251.70 L989.69 251.55 L989.55 251.69 L989.70 253.07 L988.47 253.59 L987.60 252.50 L987.40 252.50 L986.53 253.59 L985.30 253.07 L985.45 251.69 L985.31 251.55 L983.93 251.70 L983.41 250.47 L984.50 249.60 L984.50 249.40 L983.41 248.53 L983.93 247.30 L985.31 247.45 L985.45 247.31 L985.30 245.93 L986.53 245.41 L987.40 246.50 L987.60 246.50 L988.47 245.41 L989.70 245.93 L989.55 247.31 L989.69 247.45 L991.07 247.30 L991.59 248.53 L990.50 249.40 L990.50 249.60 Z" fill="#242424"/><circle cx="987.50" cy="249.50" r="1.9" fill="#fff"/><circle cx="1248" cy="243.4" r="1.3" fill="#424242"/><circle cx="1256" cy="243.4" r="1.3" fill="#424242"/><circle cx="1264" cy="243.4" r="1.3" fill="#424242"/><path d="M1466.6 79.2 L1472.6 70.8 L1478.6 79.2 Z" fill="#8b8b8b"/><path d="M1466.6 909.6 L1472.6 918.4 L1478.6 909.6 Z" fill="#8b8b8b"/></svg>
<div class="a" style="left:0;top:0;width:1482px;height:928px;box-sizing:border-box;border:1px solid rgba(0,0,0,0.10);border-radius:8px;pointer-events:none"></div>
</body></html>
